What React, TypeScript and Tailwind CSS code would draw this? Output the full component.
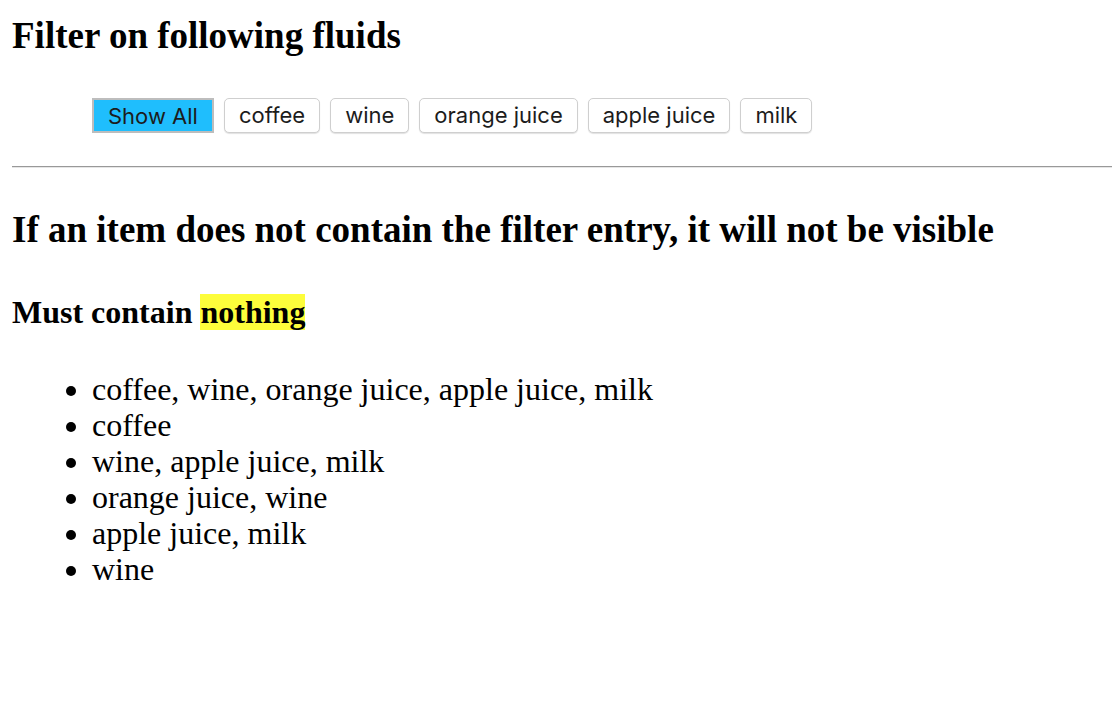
const fluids = ['coffee', 'wine', 'orange juice', 'apple juice', 'milk']

const items = [
    'coffee, wine, orange juice, apple juice, milk',
    'coffee',
    'wine, apple juice, milk',
    'orange juice, wine',
    'apple juice, milk',
    'wine',
]

export default function App() {
    return (
        <div className="min-h-[720px] bg-white text-black pl-3 pt-[14px]" style={{ fontFamily: '"Liberation Serif", "Times New Roman", serif' }}>
            <h3 className="text-[37px] leading-[43px] font-bold">Filter on following fluids</h3>

            {/* filter buttons */}
            <div className="flex gap-[10px] pl-20 mt-[41px]" style={{ fontFamily: 'Inter, "Open Sans", sans-serif' }}>
                <button className="h-[35px] px-[14px] text-[22px] text-[#1c1c1c] bg-[#1fbefd] border-2 border-[#bdbdbd]">
                    Show All
                </button>
                {fluids.map(f => (
                    <button key={f} className="h-[35px] px-[14px] text-[22px] text-[#1c1c1c] bg-white border border-[#cfcfcf] rounded-[5px] shadow-[0_1px_1px_rgba(0,0,0,0.12)]">
                        {f}
                    </button>
                ))}
            </div>

            <div className="mt-[33px] h-[2px] bg-[#999999] border-b border-[#e6e6e6]" />

            <h3 className="mt-[40px] text-[37px] leading-[43px] font-bold">If an item does not contain the filter entry, it will not be visible</h3>

            <h4 className="mt-[43px] text-[32px] leading-[37px] font-bold">
                Must contain <span className="bg-[#fdfd3b]">nothing</span>
            </h4>

            <ul className="mt-[40px] pl-20 list-disc text-[32px] leading-[36px]">
                {items.map(i => (
                    <li key={i}>{i}</li>
                ))}
            </ul>
        </div>
    )
}
